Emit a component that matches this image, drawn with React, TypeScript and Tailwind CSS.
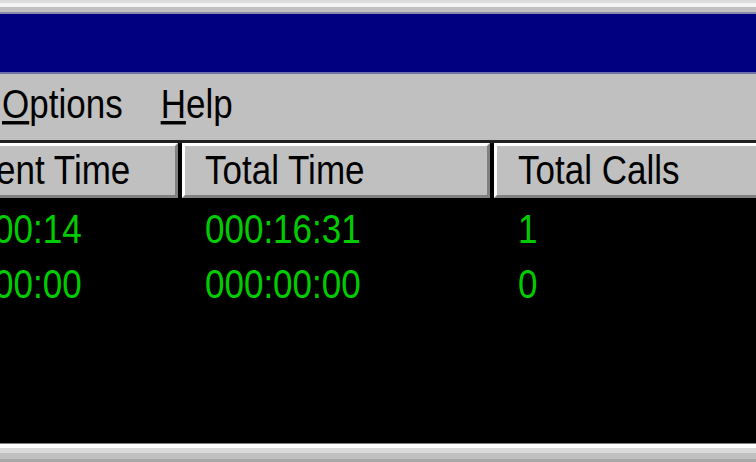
import React from 'react';

const font = "font-['Liberation_Sans',Arial,sans-serif]";

const Txt: React.FC<{ children: React.ReactNode; className?: string }> = ({ children, className = '' }) => (
  <span className={`inline-block origin-center scale-y-[1.14] whitespace-nowrap ${className}`}>{children}</span>
);

const rows = [
  { current: '000:00:14', total: '000:16:31', calls: '1' },
  { current: '000:00:00', total: '000:00:00', calls: '0' },
];

export default function App() {
  return (
    <div className={`w-[756px] h-[462px] overflow-hidden flex flex-col bg-[#c0c0c0] text-[35px] ${font}`}>
      {/* window top frame */}
      <div className="h-[3px] bg-[#dcdcdc]" />
      <div className="h-[4px] bg-[#f4f4f4]" />
      <div className="h-[5px] bg-[#c0c0c0]" />
      <div className="h-[2px] bg-[#8a8aa8]" />

      {/* title bar */}
      <div className="h-[58px] bg-[#000080]" />
      <div className="h-[2px] bg-[#7070a8]" />

      {/* menu bar */}
      <div className="h-[66px] flex items-center pl-[2px] gap-[38px] text-black pb-[6px]">
        <Txt>
          <span className="underline decoration-[3px] underline-offset-[3px]">O</span>ptions
        </Txt>
        <Txt>
          <span className="underline decoration-[3px] underline-offset-[3px]">H</span>elp
        </Txt>
      </div>

      {/* list header */}
      <div className="h-[3px] bg-[#202020]" />
      <div className="h-[55px] flex text-black">
        <div className="-ml-[90px] w-[272px] flex border-r-[4px] border-black">
          <div className="flex-1 flex items-center pl-[15px] border-t-[3px] border-l-[3px] border-white border-b-[3px] border-b-[#808080] border-r-[3px] border-r-[#808080]">
            <Txt>Current Time</Txt>
          </div>
        </div>
        <div className="w-[312px] flex border-r-[4px] border-black">
          <div className="flex-1 flex items-center pl-[20px] border-t-[3px] border-l-[3px] border-white border-b-[3px] border-b-[#808080] border-r-[3px] border-r-[#808080]">
            <Txt>Total Time</Txt>
          </div>
        </div>
        <div className="flex-1 flex">
          <div className="flex-1 flex items-center pl-[21px] border-t-[3px] border-l-[3px] border-white border-b-[3px] border-b-[#808080]">
            <Txt>Total Calls</Txt>
          </div>
        </div>
      </div>

      {/* list body */}
      <div className="flex-1 bg-black text-[#00cc00] pt-[4px]">
        {rows.map((r, i) => (
          <div key={i} className="h-[55px] flex items-center">
            <div className="-ml-[90px] w-[272px] pl-[16px]">
              <Txt>{r.current}</Txt>
            </div>
            <div className="w-[312px] pl-[23px]">
              <Txt>{r.total}</Txt>
            </div>
            <div className="flex-1 pl-[24px]">
              <Txt>{r.calls}</Txt>
            </div>
          </div>
        ))}
      </div>

      {/* window bottom frame */}
      <div className="h-[1px] bg-[#808080]" />
      <div className="h-[4px] bg-white" />
      <div className="h-[5px] bg-[#dadada]" />
      <div className="h-[6px] bg-[#c0c0c0]" />
      <div className="h-[3px] bg-[#a8a8a8]" />
    </div>
  );
}
